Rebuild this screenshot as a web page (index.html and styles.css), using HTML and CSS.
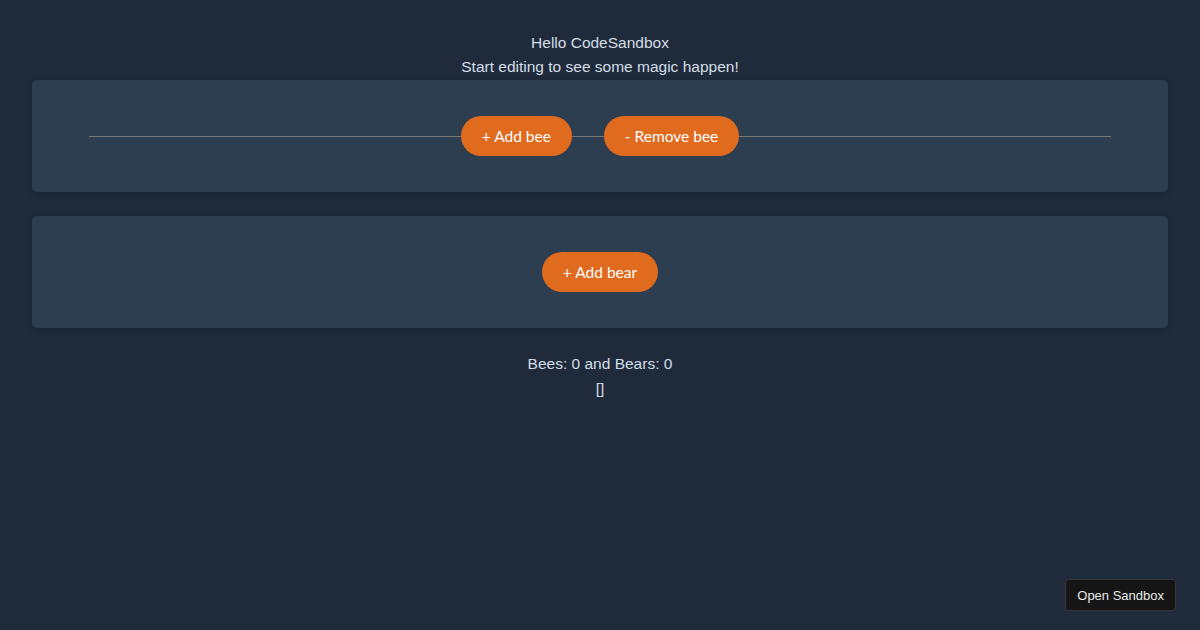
FILE: index.html
```html
<!DOCTYPE html>
<html>
<head>
<meta charset="utf-8">
<link rel="stylesheet" href="styles.css">
</head>
<body>
<div class="app">
  <div class="intro">
    <div class="line">Hello CodeSandbox</div>
    <div class="line">Start editing to see some magic happen!</div>
  </div>
  <div class="card">
    <div class="rule"></div>
    <div class="btn-row">
      <button class="btn">+ Add bee</button>
      <button class="btn">- Remove bee</button>
    </div>
  </div>
  <div class="card">
    <div class="btn-row">
      <button class="btn">+ Add bear</button>
    </div>
  </div>
  <div class="summary">
    <div class="line">Bees: 0 and Bears: 0</div>
    <div class="line">[]</div>
  </div>
</div>
<button class="open-sandbox">Open Sandbox</button>
</body>
</html>
```
FILE: styles.css
```css
html, body {
  margin: 0;
  padding: 0;
  background: #1f2b3a;
  height: 100%;
}
body {
  font-family: "Liberation Sans", Arial, sans-serif;
  color: #d3dde8;
}
.app {
  padding: 31px 32px 0;
  display: flex;
  flex-direction: column;
  gap: 24px;
}
.intro, .summary {
  text-align: center;
  font-size: 15.5px;
}
.line {
  line-height: 24px;
}
.intro {
  margin-bottom: -23px;
}
.card {
  position: relative;
  height: 112px;
  background: #2c3e50;
  border-radius: 5px;
  box-shadow: 0 2px 6px rgba(0, 0, 0, 0.15);
  display: flex;
  align-items: center;
  justify-content: center;
}
.rule {
  position: absolute;
  left: 5%;
  right: 5%;
  top: 56px;
  height: 1px;
  background: #777777;
}
.btn-row {
  position: relative;
  display: flex;
  gap: 32px;
}
.btn {
  height: 40px;
  padding: 0 21px;
  border: none;
  border-radius: 20px;
  background: #e06a1d;
  color: #ffffff;
  font-family: Lato, "Liberation Sans", sans-serif;
  font-size: 15.5px;
  cursor: pointer;
}
.summary {
  margin-top: -1px;
}
.summary .line {
  line-height: 25px;
}
.open-sandbox {
  position: fixed;
  right: 24px;
  bottom: 19px;
  height: 32px;
  padding: 0 11px;
  background: #151515;
  border: 1px solid #363636;
  border-radius: 4px;
  color: #e8e8e8;
  font-family: "Liberation Sans", Arial, sans-serif;
  font-size: 13px;
}
```
